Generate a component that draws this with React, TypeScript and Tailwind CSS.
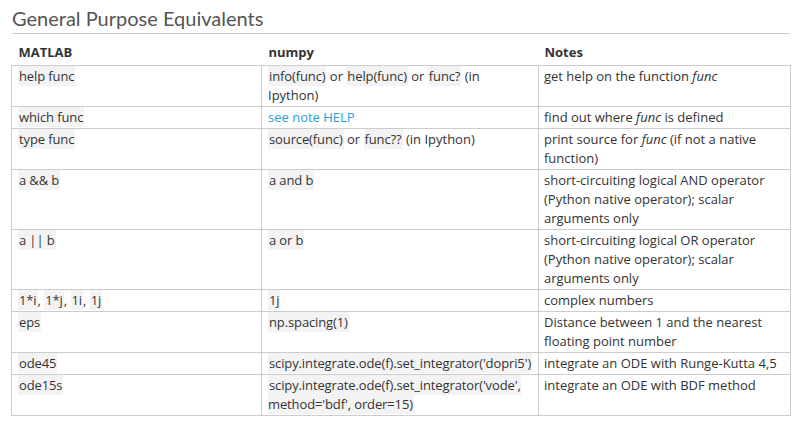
import React from 'react';

const C = ({ children }: { children: React.ReactNode }) => (
  <code className="bg-[#f3f3f3] px-[1px] py-[1px] font-['Open_Sans',sans-serif] text-[13px] tracking-[-0.12px]">{children}</code>
);

type Row = { m: React.ReactNode; n: React.ReactNode; notes: React.ReactNode };

const rows: Row[] = [
  {
    m: <C>help func</C>,
    n: (
      <>
        <C>info(func)</C> or <C>help(func)</C> or <C>func?</C> (in Ipython)
      </>
    ),
    notes: (
      <>
        get help on the function <i>func</i>
      </>
    ),
  },
  {
    m: <C>which func</C>,
    n: <span className="text-[#2a9fd6]">see note HELP</span>,
    notes: (
      <>
        find out where <i>func</i> is defined
      </>
    ),
  },
  {
    m: <C>type func</C>,
    n: (
      <>
        <C>source(func)</C> or <C>func??</C> (in Ipython)
      </>
    ),
    notes: (
      <>
        print source for <i>func</i> (if not a native function)
      </>
    ),
  },
  {
    m: <C>a &amp;&amp; b</C>,
    n: <C>a and b</C>,
    notes: 'short-circuiting logical AND operator (Python native operator); scalar arguments only',
  },
  {
    m: <C>a || b</C>,
    n: <C>a or b</C>,
    notes: 'short-circuiting logical OR operator (Python native operator); scalar arguments only',
  },
  {
    m: (
      <>
        <C>1*i</C>, <C>1*j</C>, <C>1i</C>, <C>1j</C>
      </>
    ),
    n: <C>1j</C>,
    notes: 'complex numbers',
  },
  {
    m: <C>eps</C>,
    n: <C>np.spacing(1)</C>,
    notes: 'Distance between 1 and the nearest floating point number',
  },
  {
    m: <C>ode45</C>,
    n: <C>scipy.integrate.ode(f).set_integrator('dopri5')</C>,
    notes: 'integrate an ODE with Runge-Kutta 4,5',
  },
  {
    m: <C>ode15s</C>,
    n: <C>scipy.integrate.ode(f).set_integrator('vode', method='bdf', order=15)</C>,
    notes: 'integrate an ODE with BDF method',
  },
];

export default function App() {
  return (
    <div className="w-[808px] h-[424px] bg-white px-[11px] pt-[5px] font-['Open_Sans',sans-serif] text-[13px] text-[#333]">
      <h2 className="ml-[1px] font-['Lato',sans-serif] text-[20px] leading-[26px] text-[#555] pb-[2px] border-b border-[#ccc] w-[778px]">
        General Purpose Equivalents
      </h2>
      <table className="mt-[8px] w-[779px] border-collapse table-fixed">
        <colgroup>
          <col className="w-[250px]" />
          <col className="w-[277px]" />
          <col className="w-[252px]" />
        </colgroup>
        <thead>
          <tr className="text-left font-bold">
            <th className="px-[7px] pt-[1px] pb-[3px] leading-[19px]">MATLAB</th>
            <th className="px-[7px] pt-[1px] pb-[3px] leading-[19px]">numpy</th>
            <th className="px-[6px] pt-[1px] pb-[3px] leading-[19px]">Notes</th>
          </tr>
        </thead>
        <tbody>
          {rows.map((r, i) => (
            <tr key={i} className="align-top leading-[19px]">
              <td className="border border-[#ccc] px-[6px] pt-[1px] pb-[1px]">{r.m}</td>
              <td className="border border-[#ccc] px-[6px] pt-[1px] pb-[1px]">{r.n}</td>
              <td className="border border-[#ccc] px-[5px] pt-[1px] pb-[1px]">{r.notes}</td>
            </tr>
          ))}
        </tbody>
      </table>
    </div>
  );
}
